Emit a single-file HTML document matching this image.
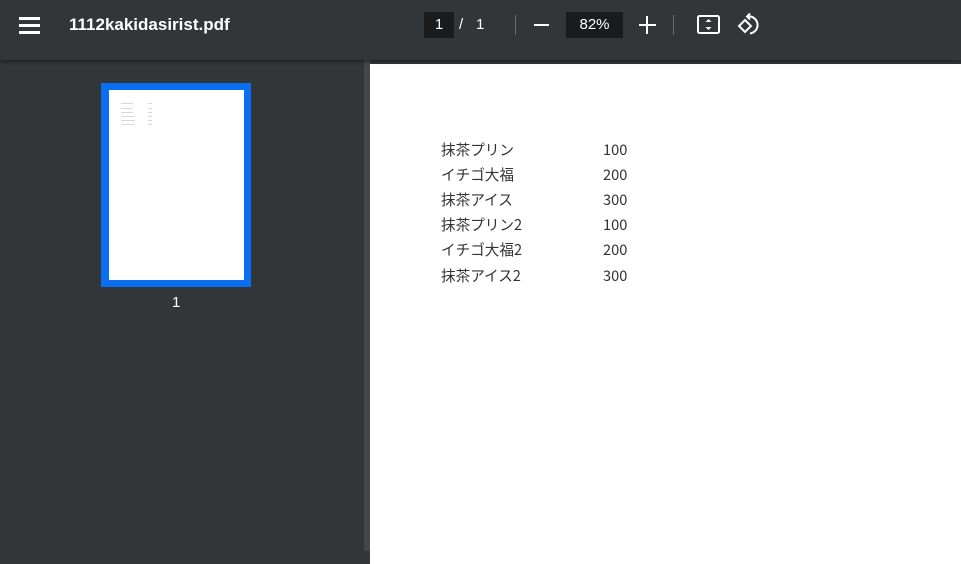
<!DOCTYPE html>
<html><head><meta charset="utf-8"><style>
body{margin:0;width:961px;height:551px;overflow:hidden;background:#323639;font-family:"Liberation Sans","Noto Sans CJK JP",sans-serif;position:relative}
.tb{position:absolute;left:0;top:0;width:961px;height:60px;background:#323639;box-shadow:0 2px 3px rgba(0,0,0,.35);z-index:2}
.a{position:absolute}
.w{color:#fff}
.page{position:absolute;left:370px;top:64px;width:600px;height:500px;background:#fff}
.sb{position:absolute;left:364px;top:60px;width:6px;height:491px;background:#43474b}
.r{position:absolute;left:441px;font-size:14.6px;color:#333;font-family:"Noto Sans CJK JP",sans-serif}
.n{position:absolute;left:603px;font-size:14.6px;color:#333;font-family:"Noto Sans CJK JP",sans-serif}
.t{position:absolute;height:1px;background:#d8d8d8}
</style></head><body>
<div class="tb">
<div class="a" style="left:19px;top:17px;width:21px;height:3px;background:#fff"></div>
<div class="a" style="left:19px;top:24px;width:21px;height:3px;background:#fff"></div>
<div class="a" style="left:19px;top:31px;width:21px;height:3px;background:#fff"></div>
<div class="a w" style="left:69px;top:15px;font-size:17px;font-weight:bold">1112kakidasirist.pdf</div>
<div class="a w" style="left:424px;top:12px;width:30px;height:26px;background:#191b1c;text-align:center;line-height:26px;font-size:15px">1</div>
<div class="a w" style="left:459px;top:16px;font-size:15px">/</div>
<div class="a w" style="left:476px;top:16px;font-size:15px">1</div>
<div class="a" style="left:515px;top:15px;width:1px;height:20px;background:#6a6d70"></div>
<div class="a" style="left:534px;top:24px;width:15px;height:2px;background:#fff"></div>
<div class="a w" style="left:566px;top:12px;width:57px;height:26px;background:#191b1c;text-align:center;line-height:26px;font-size:15px">82%</div>
<div class="a" style="left:639px;top:24px;width:17px;height:2px;background:#fff"></div>
<div class="a" style="left:646px;top:16px;width:2px;height:18px;background:#fff"></div>
<div class="a" style="left:673px;top:15px;width:1px;height:20px;background:#6a6d70"></div>
<svg class="a" style="left:696px;top:12px" width="26" height="26" viewBox="0 0 26 26"><rect x="2" y="4" width="21" height="17" rx="1.5" fill="none" stroke="#fff" stroke-width="2"/><path d="M12.5 7l-3 3h6zM12.5 18l-3-3h6z" fill="#fff"/></svg>
<svg class="a" style="left:736px;top:12px" width="26" height="26" viewBox="0 0 26 26" fill="none" stroke="#fff" stroke-width="2"><path d="M9 8l-6 6 6 6 6-6z"/><path d="M12 4.5a8.5 8.5 0 0 1 2 17"/><path d="M14 1.5l-3 3 3 3"/></svg>
</div>
<div class="a" style="left:101px;top:83px;width:150px;height:204px;background:#0a6ef0"></div>
<div class="a" style="left:109px;top:90px;width:135px;height:190px;background:#fff"></div>
<div class="t" style="left:121px;top:103px;width:12px"></div><div class="t" style="left:148px;top:103px;width:4px"></div>
<div class="t" style="left:121px;top:108px;width:12px"></div><div class="t" style="left:148px;top:108px;width:4px"></div>
<div class="t" style="left:121px;top:112px;width:12px"></div><div class="t" style="left:148px;top:112px;width:4px"></div>
<div class="t" style="left:121px;top:116px;width:14px"></div><div class="t" style="left:148px;top:116px;width:4px"></div>
<div class="t" style="left:121px;top:120px;width:14px"></div><div class="t" style="left:148px;top:120px;width:4px"></div>
<div class="t" style="left:121px;top:124px;width:14px"></div><div class="t" style="left:148px;top:124px;width:4px"></div>
<div class="a w" style="left:172px;top:294px;font-size:15px">1</div>
<div class="sb"></div>
<div class="page"></div>
<div class="r" style="top:139px">抹茶プリン</div><div class="n" style="top:139px">100</div>
<div class="r" style="top:164px">イチゴ大福</div><div class="n" style="top:164px">200</div>
<div class="r" style="top:189px">抹茶アイス</div><div class="n" style="top:189px">300</div>
<div class="r" style="top:214px">抹茶プリン2</div><div class="n" style="top:214px">100</div>
<div class="r" style="top:239px">イチゴ大福2</div><div class="n" style="top:239px">200</div>
<div class="r" style="top:265px">抹茶アイス2</div><div class="n" style="top:265px">300</div>
</body></html>
